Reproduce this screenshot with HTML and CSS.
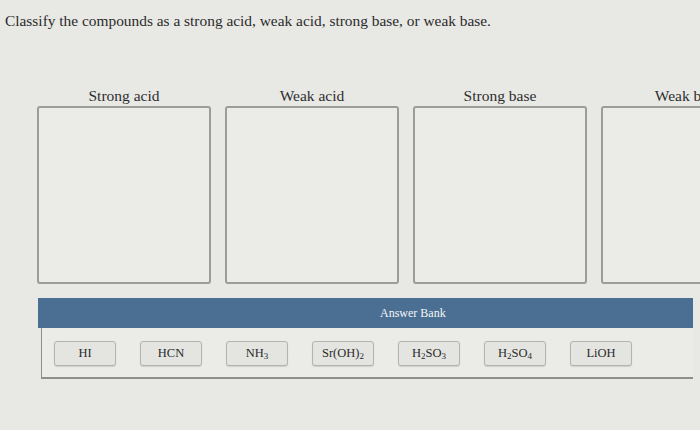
FILE: index.html
```html
<!DOCTYPE html>
<html lang="en">
<head>
<meta charset="utf-8">
<title>Classify the compounds</title>
<link rel="stylesheet" href="styles.css">
</head>
<body>
<main class="page">
  <p class="prompt">Classify the compounds as a strong acid, weak acid, strong base, or weak base.</p>

  <div class="bins">
    <div class="bin">
      <div class="bin-label">Strong acid</div>
      <div class="bin-drop"></div>
    </div>
    <div class="bin">
      <div class="bin-label">Weak acid</div>
      <div class="bin-drop"></div>
    </div>
    <div class="bin">
      <div class="bin-label">Strong base</div>
      <div class="bin-drop"></div>
    </div>
    <div class="bin">
      <div class="bin-label">Weak base</div>
      <div class="bin-drop"></div>
    </div>
  </div>

  <section class="bank">
    <div class="bank-head">Answer Bank</div>
    <div class="bank-items">
      <div class="chip">HI</div>
      <div class="chip">HCN</div>
      <div class="chip">NH<sub>3</sub></div>
      <div class="chip">Sr(OH)<sub>2</sub></div>
      <div class="chip">H<sub>2</sub>SO<sub>3</sub></div>
      <div class="chip">H<sub>2</sub>SO<sub>4</sub></div>
      <div class="chip">LiOH</div>
    </div>
  </section>
</main>
</body>
</html>
```

FILE: styles.css
```css
html, body {
  margin: 0;
  padding: 0;
  background: #e8e8e5;
}

.page {
  width: 700px;
  height: 430px;
  overflow: hidden;
  font-family: "Liberation Serif", "Times New Roman", serif;
  color: #2b2b2b;
}

.prompt {
  margin: 0;
  padding: 11px 0 0 5px;
  font-size: 15.4px;
  line-height: 20px;
  white-space: nowrap;
}

/* drop targets */
.bins {
  display: flex;
  gap: 14px;
  margin-top: 55px;
  padding-left: 37px;
}

.bin {
  flex: 0 0 174px;
  display: flex;
  flex-direction: column;
}

.bin-label {
  height: 20px;
  line-height: 20px;
  font-size: 15.5px;
  text-align: center;
  color: #2e2e2e;
  white-space: nowrap;
}

.bin-drop {
  height: 174px;
  border: 2px solid #9c9c9a;
  border-radius: 3px;
  background: #ebebe8;
}

/* answer bank */
.bank {
  width: 655px;
  margin: 14px 0 0 38px;
}

.bank-head {
  height: 30px;
  line-height: 30px;
  padding-left: 342px;
  background: #4b6f92;
  color: #f4f6f8;
  font-size: 12px;
}

.bank-items {
  display: flex;
  gap: 24px;
  padding: 13px 0 11px 12px;
  margin-left: 3px;
  border-left: 1px solid #8e8e8c;
  border-bottom: 2px solid #8e8e8c;
  background: #ebebe8;
}

.chip {
  width: 60px;
  height: 23px;
  line-height: 23px;
  text-align: center;
  font-size: 12.5px;
  color: #2a2a2a;
  background: #e4e4e1;
  border: 1px solid #b3b3b0;
  border-radius: 3px;
  box-shadow: 0 1px 1px rgba(0, 0, 0, 0.12);
}

.chip sub {
  font-size: 9px;
  line-height: 0;
  vertical-align: -2px;
}
```
